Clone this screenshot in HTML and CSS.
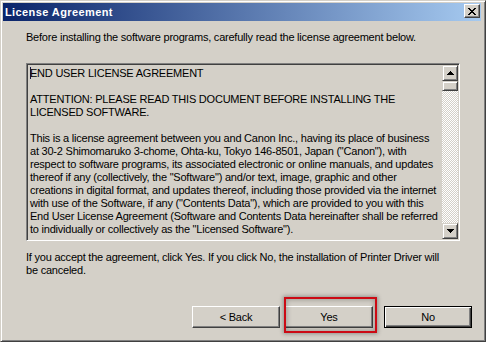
FILE: index.html
```html
<!DOCTYPE html>
<html lang="en">
<head>
  <meta charset="UTF-8" />
  <title>License Agreement</title>
  <link rel="stylesheet" href="styles.css">
</head>
<body>

  <div class="window">
    <div class="titlebar">
      <span class="title">License Agreement</span>
      <button class="close-btn" title="Close">
        <svg width="8" height="7" viewBox="0 0 8 7" shape-rendering="crispEdges">
          <path d="M0 0h2v1h1v1h2V1h1V0h2v1H7v1H6v1H5v1h1v1h1v1h1v1H6V6H5V5H3v1H2v1H0V6h1V5h1V4h1V3H2V2H1V1H0z" fill="#000"/>
        </svg>
      </button>
    </div>

    <div class="content">
      <p class="intro">Before installing the software programs, carefully read the license agreement below.</p>

      <div class="license-box">
        <div class="license-text">
          <p><span class="caret"></span>END USER LICENSE AGREEMENT</p>
          <p>ATTENTION: PLEASE READ THIS DOCUMENT BEFORE INSTALLING THE<br>LICENSED SOFTWARE.</p>
          <p>This is a license agreement between you and Canon Inc., having its place of business<br>at 30-2 Shimomaruko 3-chome, Ohta-ku, Tokyo 146-8501, Japan ("Canon"), with<br>respect to software programs, its associated electronic or online manuals, and updates<br>thereof if any (collectively, the "Software") and/or text, image, graphic and other<br>creations in digital format, and updates thereof, including those provided via the internet<br>with use of the Software, if any ("Contents Data"), which are provided to you with this<br>End User License Agreement (Software and Contents Data hereinafter shall be referred<br>to individually or collectively as the "Licensed Software").</p>
        </div>
        <div class="scrollbar">
          <div class="sb-btn">
            <svg width="7" height="4" viewBox="0 0 7 4" shape-rendering="crispEdges"><path d="M3 0h1v1h1v1h1v1h1v1H0V3h1V2h1V1h1z" fill="#000"/></svg>
          </div>
          <div class="sb-thumb"></div>
          <div class="sb-track"></div>
          <div class="sb-btn">
            <svg width="7" height="4" viewBox="0 0 7 4" shape-rendering="crispEdges"><path d="M0 0h7v1H6v1H5v1H4v1H3V3H2V2H1V1H0z" fill="#000"/></svg>
          </div>
        </div>
      </div>

      <p class="notice">If you accept the agreement, click Yes. If you click No, the installation of Printer Driver will<br>be canceled.</p>

      <div class="buttons">
        <button class="btn">&lt; Back</button>
        <div class="btn-wrap">
          <button class="btn">Yes</button>
          <span class="highlight"></span>
        </div>
        <button class="btn btn-default">No</button>
      </div>
    </div>
  </div>

</body>
</html>
```

FILE: styles.css
```css
:root {
  --face: #d4d0c8;
  --shadow: #808080;
  --dark: #404040;
  --light: #ffffff;
  --title-start: #0a246a;
  --title-end: #a6caf0;
  --mark-red: #cc0a14;
}

* {
  box-sizing: border-box;
}

body {
  margin: 0;
  font-family: Tahoma, "Liberation Sans", Arial, sans-serif;
  font-size: 11px;
  color: #000;
  background: var(--face);
}

p {
  margin: 0;
}

/* janela classica */
.window {
  width: 486px;
  height: 342px;
  background: var(--face);
  border: 1px solid;
  border-color: var(--face) var(--dark) var(--dark) var(--face);
  box-shadow: inset 1px 1px var(--light), inset -1px -1px var(--shadow);
  padding: 2px 4px 2px 2px;
  display: flex;
  flex-direction: column;
}

.titlebar {
  height: 18px;
  background: linear-gradient(to right, var(--title-start), var(--title-end));
  display: flex;
  align-items: flex-start;
  justify-content: space-between;
  padding-left: 2px;
}

.title {
  color: #fff;
  font-weight: bold;
  letter-spacing: 0.4px;
  line-height: 18px;
}

.close-btn {
  width: 16px;
  height: 14px;
  margin: 1px 1px 0 0;
  padding: 0;
  background: var(--face);
  border: 1px solid;
  border-color: var(--light) var(--dark) var(--dark) var(--light);
  box-shadow: inset -1px -1px var(--shadow);
  display: flex;
  align-items: center;
  justify-content: center;
}

.content {
  padding: 10px 9px 0 23px;
  display: flex;
  flex-direction: column;
  letter-spacing: -0.22px;
}

.intro,
.notice {
  line-height: 13px;
  white-space: nowrap;
}

/* caixa da licenca */
.license-box {
  width: 434px;
  height: 178px;
  margin-top: 19px;
  border: 1px solid;
  border-color: var(--shadow) var(--light) var(--light) var(--shadow);
  box-shadow: inset 1px 1px var(--dark), inset -1px -1px var(--face);
  padding: 1px;
  display: flex;
}

.license-text {
  flex: 1;
  overflow: hidden;
  padding: 2px 0 0 2px;
  line-height: 13px;
  white-space: nowrap;
}

.license-text p + p {
  margin-top: 13px;
}

.caret {
  display: inline-block;
  width: 1px;
  height: 12px;
  margin-right: -1px;
  vertical-align: -2px;
  background: #1a1a4a;
}

.scrollbar {
  width: 16px;
  display: flex;
  flex-direction: column;
}

.sb-btn,
.sb-thumb {
  background: var(--face);
  border: 1px solid;
  border-color: var(--face) var(--dark) var(--dark) var(--face);
  box-shadow: inset 1px 1px var(--light), inset -1px -1px var(--shadow);
}

.sb-btn {
  height: 16px;
  display: flex;
  align-items: center;
  justify-content: center;
}

.sb-thumb {
  height: 10px;
}

.sb-track {
  flex: 1;
  background: repeating-conic-gradient(var(--light) 0 25%, var(--face) 0 50%) 0 0 / 2px 2px;
}

.notice {
  margin-top: 10px;
}

/* botoes */
.buttons {
  margin-top: 29px;
  display: flex;
  justify-content: flex-end;
  gap: 5px;
}

.btn {
  width: 88px;
  height: 22px;
  padding: 0;
  font-family: inherit;
  font-size: 11px;
  letter-spacing: -0.2px;
  color: #000;
  background: var(--face);
  border: 1px solid;
  border-color: var(--light) var(--dark) var(--dark) var(--light);
  box-shadow: inset -1px -1px var(--shadow);
}

.btn-default {
  margin-left: 6px;
  border-color: #000;
  box-shadow: inset 1px 1px var(--light), inset -1px -1px var(--dark), inset -2px -2px var(--shadow);
}

.btn-wrap {
  position: relative;
}

.highlight {
  position: absolute;
  left: -1px;
  top: -9px;
  width: 93px;
  height: 36px;
  border: 2px solid var(--mark-red);
  box-shadow: 0 0 4px 1px rgba(0, 0, 0, 0.3), inset 0 0 5px 1px rgba(0, 0, 0, 0.25);
}
```
